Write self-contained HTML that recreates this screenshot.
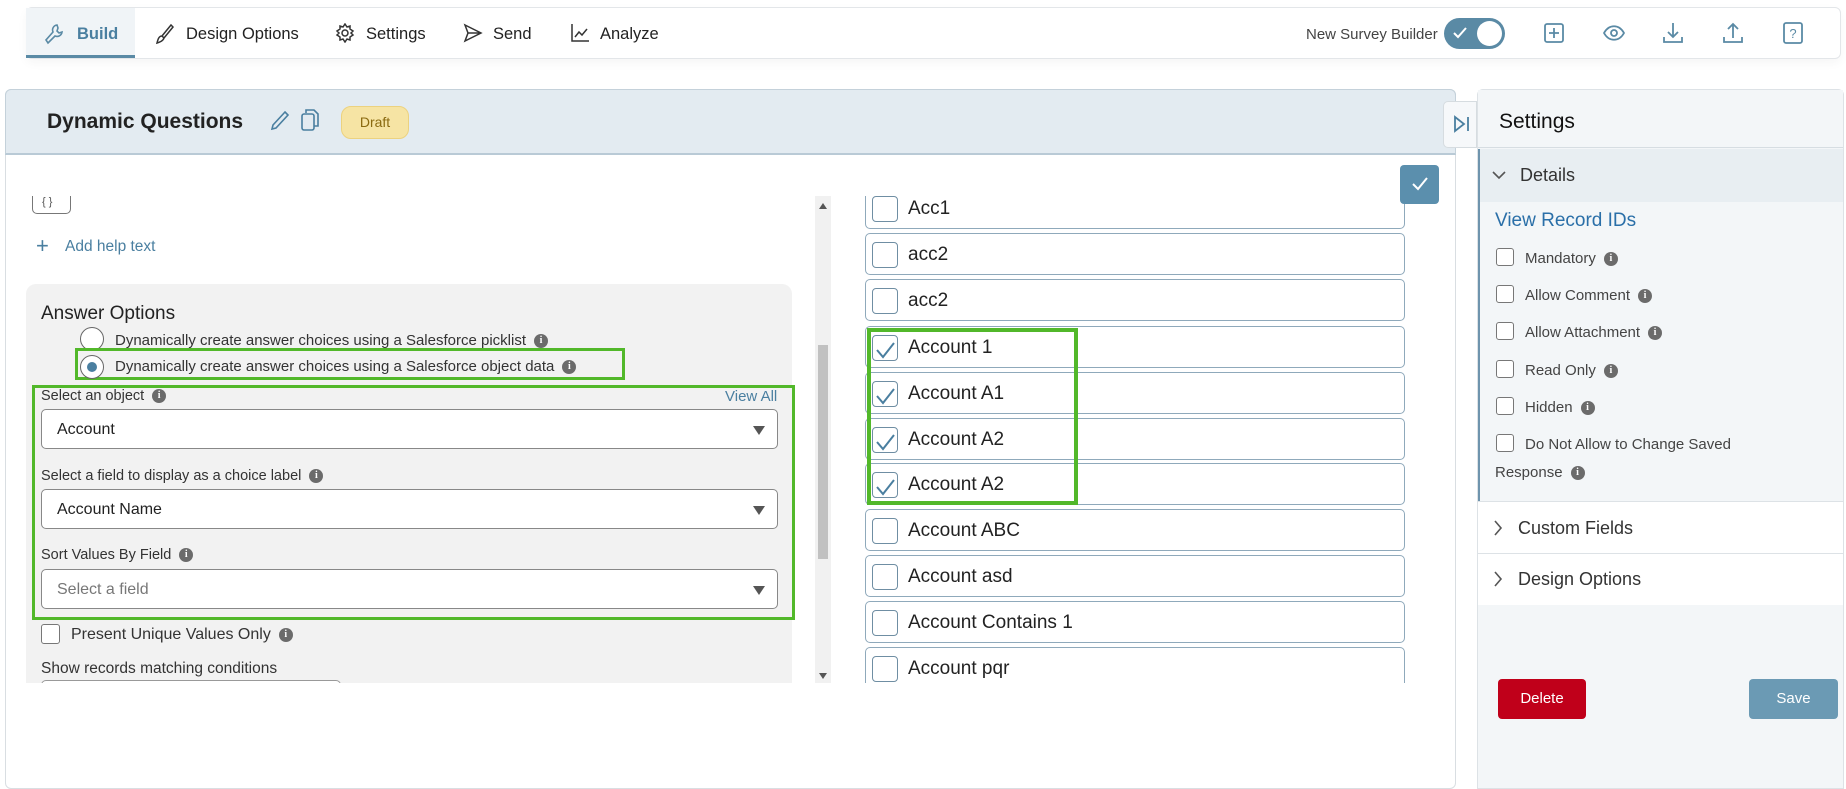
<!DOCTYPE html>
<html><head><meta charset="utf-8"><style>
*{box-sizing:border-box;margin:0;padding:0}
body{width:1846px;height:724px;overflow:hidden;background:#fff;font-family:"Liberation Sans",sans-serif;color:#222;position:relative}
.a{position:absolute}
.info{display:inline-block;width:14px;height:14px;border-radius:50%;background:#6b6b6b;color:#fff;font-size:10px;font-weight:bold;text-align:center;line-height:14px;vertical-align:middle;margin-left:8px;font-family:"Liberation Serif",serif}
.sel{position:absolute;left:41px;width:737px;height:40px;background:#fff;border:1px solid #888;border-radius:5px;font-size:16px;padding-left:15px;line-height:40px}
.sel:after{content:"";position:absolute;right:12px;top:16px;border-left:6px solid transparent;border-right:6px solid transparent;border-top:9px solid #555}
.lbl{position:absolute;left:41px;font-size:14.5px;color:#333}
.item{position:absolute;left:865px;width:540px;height:42px;border:1px solid #8fa9bb;border-radius:5px;background:#fff;font-size:19px;line-height:42px;padding-left:42px;color:#222}
.item .cb{position:absolute;left:6px;top:8px;width:26px;height:26px;border:1px solid #6f8ea3;border-radius:4px;background:#fff}
.scb{position:absolute;left:1496px;width:18px;height:18px;border:1px solid #777;border-radius:3px;background:#fff}
.sl{position:absolute;left:1525px;font-size:15px;color:#444}
</style></head><body>
<div class="a" style="left:26px;top:7px;width:1815px;height:52px;border:1px solid #e3e6e9;border-radius:6px;box-shadow:0 4px 10px rgba(0,0,0,0.04)"></div>
<div class="a" style="left:26px;top:8px;width:109px;height:50px;background:#f0f4f7;border-bottom:3px solid #5a8aa5"></div>
<svg class="a" style="left:44px;top:23px" width="20" height="22" viewBox="0 0 20 22" fill="none" stroke="#5a8aa5" stroke-width="1.6"><path d="M13 2a5 5 0 0 0-4 7L2 17l2 3 7-7a5 5 0 0 0 7-4l-3 1-2-2 1-3z"/></svg>
<div class="a" style="left:77px;top:25px;font-size:16.5px;font-weight:bold;color:#4a7fa0">Build</div>
<svg class="a" style="left:154px;top:23px" width="20" height="22" viewBox="0 0 20 22" fill="none" stroke="#333" stroke-width="1.5"><path d="M17 2L8 13l2 2L19 4zM8 13c-3 0-4 3-5 7 3-1 6-2 7-5"/></svg>
<div class="a" style="left:186px;top:25px;font-size:16.5px">Design Options</div>
<svg class="a" style="left:335px;top:23px" width="20" height="20" viewBox="0 0 20 20" fill="none" stroke="#333" stroke-width="1.5"><circle cx="10" cy="10" r="3"/><path d="M10 1l2 3 3-1 0 3 3 2-2 2 2 2-3 2 0 3-3-1-2 3-2-3-3 1 0-3-3-2 2-2-2-2 3-2 0-3 3 1z"/></svg>
<div class="a" style="left:366px;top:25px;font-size:16.5px">Settings</div>
<svg class="a" style="left:463px;top:23px" width="20" height="20" viewBox="0 0 20 20" fill="none" stroke="#333" stroke-width="1.5"><path d="M2 2l16 8-16 8 3-8zM5 10h13"/></svg>
<div class="a" style="left:493px;top:25px;font-size:16.5px">Send</div>
<svg class="a" style="left:570px;top:23px" width="20" height="20" viewBox="0 0 20 20" fill="none" stroke="#333" stroke-width="1.5"><path d="M2 1v17h17M5 14l4-5 3 3 5-6"/></svg>
<div class="a" style="left:600px;top:25px;font-size:16.5px">Analyze</div>
<div class="a" style="left:1306px;top:26px;font-size:15px;color:#444">New Survey Builder</div>
<div class="a" style="left:1444px;top:18px;width:61px;height:31px;border-radius:16px;background:#5a8aa5"></div>
<div class="a" style="left:1477px;top:21px;width:25px;height:25px;border-radius:50%;background:#fff"></div>
<svg class="a" style="left:1452px;top:26px" width="16" height="14" viewBox="0 0 16 14" fill="none" stroke="#fff" stroke-width="2"><path d="M2 7l4 4 8-9"/></svg>
<svg class="a" style="left:1543px;top:22px" width="22" height="22" viewBox="0 0 22 22" fill="none" stroke="#5a8aa5" stroke-width="1.8"><rect x="2" y="2" width="18" height="18" rx="2"/><path d="M11 6v10M6 11h10"/></svg>
<svg class="a" style="left:1603px;top:24px" width="22" height="18" viewBox="0 0 22 18" fill="none" stroke="#5a8aa5" stroke-width="1.8"><path d="M1 9c5-9 15-9 20 0-5 9-15 9-20 0z"/><circle cx="11" cy="9" r="3"/></svg>
<svg class="a" style="left:1662px;top:21px" width="22" height="24" viewBox="0 0 22 24" fill="none" stroke="#5a8aa5" stroke-width="1.8"><path d="M11 2v14M6 11l5 5 5-5M2 16v5h18v-5"/></svg>
<svg class="a" style="left:1722px;top:21px" width="22" height="24" viewBox="0 0 22 24" fill="none" stroke="#5a8aa5" stroke-width="1.8"><path d="M11 17V3M6 8l5-5 5 5M2 16v5h18v-5"/></svg>
<svg class="a" style="left:1782px;top:21px" width="22" height="24" viewBox="0 0 22 24" fill="none" stroke="#5a8aa5" stroke-width="1.8"><rect x="2" y="2" width="18" height="20" rx="2"/><text x="11" y="17" font-size="13" text-anchor="middle" fill="#5a8aa5" stroke="none" font-family="Liberation Sans">?</text></svg>

<div class="a" style="left:5px;top:89px;width:1451px;height:700px;border:1px solid #d9dee2;border-radius:6px;background:#fff"></div>
<div class="a" style="left:5px;top:89px;width:1451px;height:66px;background:#e3ebf1;border:1px solid #c4d1da;border-bottom:2px solid #b9cad6;border-radius:6px 6px 0 0"></div>
<div class="a" style="left:47px;top:110px;font-size:21px;font-weight:bold;color:#222">Dynamic Questions</div>
<svg class="a" style="left:270px;top:110px" width="20" height="22" viewBox="0 0 20 22" fill="none" stroke="#4a7fa0" stroke-width="1.6"><path d="M15 2l3 3L6 18l-4 1 1-4z"/></svg>
<svg class="a" style="left:299px;top:108px" width="22" height="24" viewBox="0 0 22 24" fill="none" stroke="#4a7fa0" stroke-width="1.6"><path d="M7 5V2h8l4 4v12h-4"/><rect x="3" y="6" width="12" height="16" rx="2"/></svg>
<div class="a" style="left:341px;top:106px;width:68px;height:33px;border-radius:10px;background:#f6e4a4;border:1px solid #ecd27f;color:#8a6a10;font-size:14px;text-align:center;line-height:31px">Draft</div>

<div class="a" style="left:1443px;top:101px;width:34px;height:47px;background:#f6f8fa;border:1px solid #d6dce0;border-radius:5px 0 0 5px"></div>
<svg class="a" style="left:1453px;top:115px" width="18" height="18" viewBox="0 0 18 18" fill="none" stroke="#4a7fa0" stroke-width="1.8"><path d="M2 2l9 7-9 7zM15 2v14"/></svg>

<div class="a" style="left:32px;top:170px;width:39px;height:44px;border:1px solid #777;border-radius:5px;background:#fff"></div>
<div class="a" style="left:6px;top:156px;width:800px;height:40px;background:#fff"></div>
<div class="a" style="left:42px;top:196px;font-size:11px;color:#555">{ }</div>
<div class="a" style="left:36px;top:235px;font-size:22px;color:#4a7fa0;line-height:22px">+</div>
<div class="a" style="left:65px;top:238px;font-size:15.5px;color:#4a7fa0">Add help text</div>
<div class="a" style="left:26px;top:284px;width:766px;height:400px;background:#f2f2f2;border-radius:10px 10px 0 0"></div>
<div class="a" style="left:41px;top:303px;font-size:19px;color:#222">Answer Options</div>
<div class="a" style="left:80px;top:327px;width:24px;height:24px;border:1px solid #666;border-radius:50%;background:#fff"></div>
<div class="a" style="left:115px;top:332px;font-size:15px;color:#333">Dynamically create answer choices using a Salesforce picklist<span class="info">i</span></div>
<div class="a" style="left:75px;top:348px;width:550px;height:32px;border:3px solid #52b82a"></div>
<div class="a" style="left:80px;top:355px;width:24px;height:24px;border:1px solid #666;border-radius:50%;background:#fff"></div>
<div class="a" style="left:87px;top:362px;width:10px;height:10px;border-radius:50%;background:#4a7fa0"></div>
<div class="a" style="left:115px;top:358px;font-size:15px;color:#333">Dynamically create answer choices using a Salesforce object data<span class="info">i</span></div>
<div class="a" style="left:32px;top:385px;width:763px;height:235px;border:3px solid #52b82a"></div>
<div class="lbl" style="top:388px">Select an object<span class="info">i</span></div>
<div class="a" style="left:725px;top:388px;font-size:15px;color:#4a7fa0">View All</div>
<div class="sel" style="top:409px">Account</div>
<div class="lbl" style="top:468px">Select a field to display as a choice label<span class="info">i</span></div>
<div class="sel" style="top:489px">Account Name</div>
<div class="lbl" style="top:547px">Sort Values By Field<span class="info">i</span></div>
<div class="sel" style="top:569px;color:#777">Select a field</div>
<div class="a" style="left:41px;top:624px;width:19px;height:20px;border:1px solid #777;border-radius:3px;background:#fff"></div>
<div class="a" style="left:71px;top:626px;font-size:16px;color:#333">Present Unique Values Only<span class="info">i</span></div>
<div class="lbl" style="top:660px;font-size:15.5px">Show records matching conditions</div>
<div class="a" style="left:41px;top:680px;width:300px;height:10px;border:1px solid #999;border-bottom:none;border-radius:5px 5px 0 0;background:#fff"></div>
<div class="a" style="left:6px;top:683px;width:850px;height:41px;background:#fff"></div>

<div class="a" style="left:815px;top:196px;width:16px;height:487px;background:#f1f1f1"></div>
<div class="a" style="left:818px;top:345px;width:10px;height:214px;background:#c1c1c1"></div>
<div class="a" style="left:819px;top:203px;border-left:4px solid transparent;border-right:4px solid transparent;border-bottom:6px solid #555"></div>
<div class="a" style="left:819px;top:673px;border-left:4px solid transparent;border-right:4px solid transparent;border-top:6px solid #555"></div>

<div class="a" style="left:860px;top:196px;width:560px;height:487px;overflow:hidden">
<div style="position:relative;left:-860px;top:-196px">
<div class="item" style="top:187px"><span class="cb"></span>Acc1</div>
<div class="item" style="top:233px"><span class="cb"></span>acc2</div>
<div class="item" style="top:279px"><span class="cb"></span>acc2</div>
<div class="item" style="top:326px"><span class="cb"><svg width="24" height="24" viewBox="0 0 24 24" fill="none" stroke="#4a7fa0" stroke-width="2"><path d="M4 12l6 7L21 5"/></svg></span>Account 1</div>
<div class="item" style="top:372px"><span class="cb"><svg width="24" height="24" viewBox="0 0 24 24" fill="none" stroke="#4a7fa0" stroke-width="2"><path d="M4 12l6 7L21 5"/></svg></span>Account A1</div>
<div class="item" style="top:418px"><span class="cb"><svg width="24" height="24" viewBox="0 0 24 24" fill="none" stroke="#4a7fa0" stroke-width="2"><path d="M4 12l6 7L21 5"/></svg></span>Account A2</div>
<div class="item" style="top:463px"><span class="cb"><svg width="24" height="24" viewBox="0 0 24 24" fill="none" stroke="#4a7fa0" stroke-width="2"><path d="M4 12l6 7L21 5"/></svg></span>Account A2</div>
<div class="item" style="top:509px"><span class="cb"></span>Account ABC</div>
<div class="item" style="top:555px"><span class="cb"></span>Account asd</div>
<div class="item" style="top:601px"><span class="cb"></span>Account Contains 1</div>
<div class="item" style="top:647px"><span class="cb"></span>Account pqr</div>
<div class="a" style="left:867px;top:328px;width:211px;height:177px;border:4px solid #52b82a"></div>
</div></div>
<div class="a" style="left:1400px;top:165px;width:39px;height:39px;border-radius:4px;background:#5b8fad"></div>
<svg class="a" style="left:1410px;top:175px" width="20" height="18" viewBox="0 0 20 18" fill="none" stroke="#fff" stroke-width="2"><path d="M3 9l5 5L17 3"/></svg>

<div class="a" style="left:1477px;top:89px;width:367px;height:700px;background:#f3f6f8;border:1px solid #dde2e6;border-radius:6px 6px 0 0"></div>
<div class="a" style="left:1478px;top:90px;width:365px;height:58px;background:#f3f6f8;border-bottom:1px solid #d6dde2"></div>
<div class="a" style="left:1499px;top:110px;font-size:21px;color:#111">Settings</div>
<div class="a" style="left:1478px;top:149px;width:365px;height:53px;background:#e8eef2"></div>
<div class="a" style="left:1478px;top:149px;width:2px;height:352px;background:#6f94ad"></div>
<svg class="a" style="left:1491px;top:169px" width="16" height="12" viewBox="0 0 16 12" fill="none" stroke="#555" stroke-width="1.6"><path d="M2 3l6 6 6-6"/></svg>
<div class="a" style="left:1520px;top:165px;font-size:18px;color:#333">Details</div>
<div class="a" style="left:1495px;top:210px;font-size:19px;color:#2a6fa8">View Record IDs</div>
<div class="scb" style="top:248px"></div><div class="sl" style="top:250px">Mandatory<span class="info">i</span></div>
<div class="scb" style="top:285px"></div><div class="sl" style="top:287px">Allow Comment<span class="info">i</span></div>
<div class="scb" style="top:322px"></div><div class="sl" style="top:324px">Allow Attachment<span class="info">i</span></div>
<div class="scb" style="top:360px"></div><div class="sl" style="top:362px">Read Only<span class="info">i</span></div>
<div class="scb" style="top:397px"></div><div class="sl" style="top:399px">Hidden<span class="info">i</span></div>
<div class="scb" style="top:434px"></div><div class="sl" style="top:436px">Do Not Allow to Change Saved</div>
<div class="sl" style="left:1495px;top:464px">Response<span class="info">i</span></div>
<div class="a" style="left:1478px;top:501px;width:365px;height:104px;background:#fff;border-top:1px solid #dde2e6"></div>
<div class="a" style="left:1478px;top:553px;width:365px;height:1px;background:#dde2e6"></div>
<svg class="a" style="left:1492px;top:519px" width="12" height="18" viewBox="0 0 12 18" fill="none" stroke="#555" stroke-width="1.6"><path d="M3 2l6 7-6 7"/></svg>
<div class="a" style="left:1518px;top:518px;font-size:18px;color:#333">Custom Fields</div>
<svg class="a" style="left:1492px;top:570px" width="12" height="18" viewBox="0 0 12 18" fill="none" stroke="#555" stroke-width="1.6"><path d="M3 2l6 7-6 7"/></svg>
<div class="a" style="left:1518px;top:569px;font-size:18px;color:#333">Design Options</div>
<div class="a" style="left:1498px;top:679px;width:88px;height:40px;border-radius:4px;background:#c0001a;color:#fff;font-size:15px;text-align:center;line-height:40px">Delete</div>
<div class="a" style="left:1749px;top:679px;width:89px;height:40px;border-radius:4px;background:#6b9ab4;color:#fff;font-size:15px;text-align:center;line-height:40px">Save</div>
</body></html>
